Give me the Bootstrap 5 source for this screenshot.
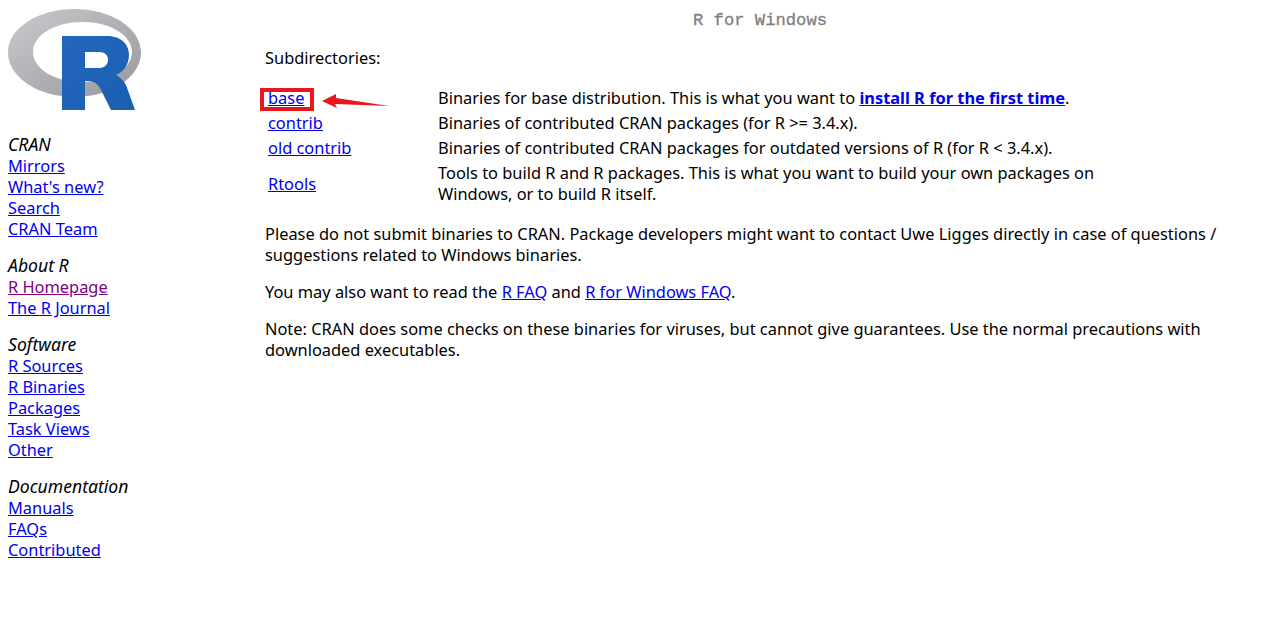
<!DOCTYPE html>
<html lang="en">
<head>
  <meta charset="UTF-8" />
  <meta name="viewport" content="width=device-width, initial-scale=1.0"/>
  <title>R for Windows</title>
  <link href="https://cdn.jsdelivr.net/npm/bootstrap@5.3.0/dist/css/bootstrap.min.css" rel="stylesheet"/>
  <style>
    body {
      font-family: "Noto Sans", sans-serif;
      font-size: 16.4px;
      line-height: 21px;
      color: #000;
      background: #fff;
    }
    a { color: #0000ee; }
    a.seen { color: #800080; }
    .side-col { width: 265px; flex: none; padding: 8px 0 0 8px; }
    .logo { display: block; width: 135px; height: 112px; margin-bottom: 14px; }
    .side-group { margin-bottom: 16px; }
    .side-group em { display: block; font-size: 17.6px; }
    .side-group a { display: block; width: max-content; }
    .main-col { flex: 1; min-width: 0; }
    .page-title {
      font-family: "Liberation Mono", monospace;
      font-size: 17.2px;
      font-weight: 400;
      line-height: 21px;
      color: #808080;
      text-align: center;
      margin: 10px 0 16px -8px;
      -webkit-text-stroke: .3px #808080;
    }
    .main-col p { margin: 0 0 16px; }
    .dir-wrap { position: relative; margin: 16px 0; }
    .dir-table { border-collapse: separate; border-spacing: 2px; }
    .dir-table td { padding: 1px; vertical-align: middle; }
    .dir-name { width: 168px; }
    .dir-desc { width: 665px; }
    .mark-box {
      position: absolute;
      left: -5px; top: 4px;
      width: 54px; height: 23px;
      border: 4px solid #e9161d;
    }
    .mark-arrow { position: absolute; left: 55px; top: 9px; width: 70px; height: 18px; }
  </style>
</head>
<body>
  <div class="d-flex">
    <div class="side-col">
      <svg class="logo" viewBox="0 0 135 112" xmlns="http://www.w3.org/2000/svg" role="img" aria-label="R logo">
        <defs>
          <linearGradient id="ringFill" x1="0" y1="0" x2="1" y2="1">
            <stop offset="0" stop-color="#c9cacd"/>
            <stop offset="1" stop-color="#97989c"/>
          </linearGradient>
          <linearGradient id="letterFill" x1="0" y1="0" x2="1" y2="1">
            <stop offset="0" stop-color="#2267bd"/>
            <stop offset="1" stop-color="#1a5fb0"/>
          </linearGradient>
        </defs>
        <path fill="url(#ringFill)" fill-rule="evenodd" d="M66.5 1C103 1 133 20 133 44.500C133 69 103 89 66.500 89C30 89 0 69 0 44.500C0 20 30 1 66.500 1ZM74.500 14C47 14 25 27 25 44C25 61 47 74 74.500 74C102 74 124 61 124 44C124 27 102 14 74.500 14Z"/>
        <path fill="url(#letterFill)" fill-rule="evenodd" d="M54 28H99C114 28 121 37 121 47C121 57 115 64 108 67C112 69 115 72 118 77L127 102H103L92 80C88 74 85 73 77 73V102H54ZM77 44V60H91C97 60 100 56 100 52C100 47 97 44 91 44Z"/>
      </svg>
      <div class="side-group">
        <em>CRAN</em>
        <a href="#">Mirrors</a>
        <a href="#">What's new?</a>
        <a href="#">Search</a>
        <a href="#">CRAN Team</a>
      </div>
      <div class="side-group">
        <em>About R</em>
        <a href="#" class="seen">R Homepage</a>
        <a href="#">The R Journal</a>
      </div>
      <div class="side-group">
        <em>Software</em>
        <a href="#">R Sources</a>
        <a href="#">R Binaries</a>
        <a href="#">Packages</a>
        <a href="#">Task Views</a>
        <a href="#">Other</a>
      </div>
      <div class="side-group">
        <em>Documentation</em>
        <a href="#">Manuals</a>
        <a href="#">FAQs</a>
        <a href="#">Contributed</a>
      </div>
    </div>
    <div class="main-col">
      <h1 class="page-title">R for Windows</h1>
      <p>Subdirectories:</p>
      <div class="dir-wrap">
        <table class="dir-table">
          <tr>
            <td class="dir-name"><a href="#">base</a></td>
            <td class="dir-desc">Binaries for base distribution. This is what you want to <a href="#"><strong>install R for the first time</strong></a>.</td>
          </tr>
          <tr>
            <td><a href="#">contrib</a></td>
            <td>Binaries of contributed CRAN packages (for R &gt;= 3.4.x).</td>
          </tr>
          <tr>
            <td><a href="#">old contrib</a></td>
            <td>Binaries of contributed CRAN packages for outdated versions of R (for R &lt; 3.4.x).</td>
          </tr>
          <tr>
            <td><a href="#">Rtools</a></td>
            <td>Tools to build R and R packages. This is what you want to build your own packages on Windows, or to build R itself.</td>
          </tr>
        </table>
        <div class="mark-box"></div>
        <svg class="mark-arrow" viewBox="0 0 70 18" xmlns="http://www.w3.org/2000/svg" aria-hidden="true">
          <path fill="#e9161d" d="M2 8L16 1L16 5L69 13L15 11L17 15Z"/>
        </svg>
      </div>
      <p>Please do not submit binaries to CRAN. Package developers might want to contact Uwe Ligges directly in case of questions / suggestions related to Windows binaries.</p>
      <p>You may also want to read the <a href="#">R FAQ</a> and <a href="#">R for Windows FAQ</a>.</p>
      <p>Note: CRAN does some checks on these binaries for viruses, but cannot give guarantees. Use the normal precautions with downloaded executables.</p>
    </div>
  </div>
  <script src="https://cdn.jsdelivr.net/npm/bootstrap@5.3.0/dist/js/bootstrap.bundle.min.js"></script>
</body>
</html>
